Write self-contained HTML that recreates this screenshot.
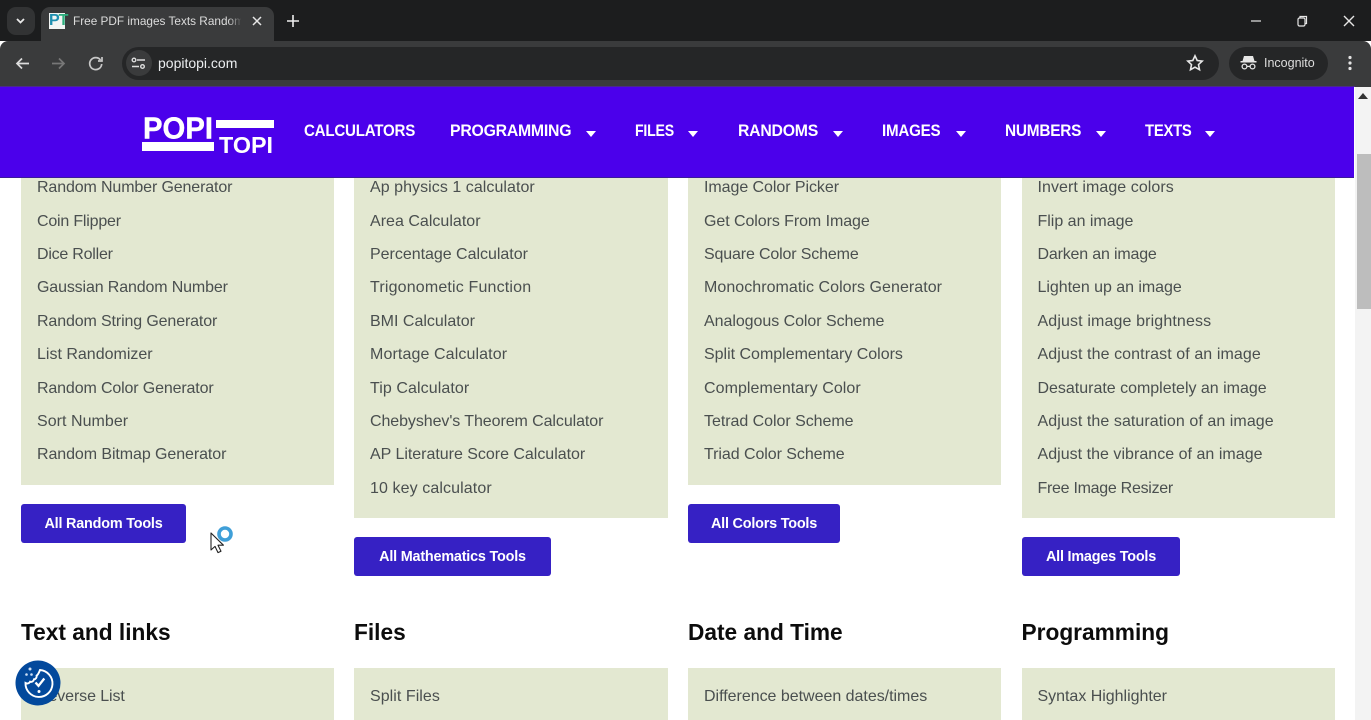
<!DOCTYPE html>
<html><head><meta charset="utf-8"><title>Free PDF images Texts Random</title>
<style>
html,body{margin:0;padding:0;background:#fff;overflow:hidden}
body{width:1371px;height:720px;position:relative;font-family:"Liberation Sans",sans-serif}
.a{position:absolute;white-space:nowrap}
.box{position:absolute;background:#e3e8d1}
.i{position:absolute;white-space:nowrap;color:#4a4f4f;font-size:16px;line-height:20px}
.btn{position:absolute;background:#3621c4;border-radius:3px;color:#fff;font-weight:bold;font-size:14.4px;line-height:40px;height:39px;text-align:center;white-space:nowrap;letter-spacing:-.2px}
.h{position:absolute;white-space:nowrap;color:#0c0c0c;font-weight:bold;font-size:22.7px;line-height:28px}
.n{position:absolute;white-space:nowrap;color:#fff;font-weight:bold;font-size:17px;line-height:20px;top:121px;letter-spacing:-.25px;transform-origin:0 50%}
.c{position:absolute;top:131px;width:0;height:0;border-left:5.5px solid transparent;border-right:5.5px solid transparent;border-top:6px solid #fff}
</style></head><body>
<!-- content -->
<div class="box" style="left:21px;top:170px;width:313px;height:315px"></div>
<div class="box" style="left:354px;top:170px;width:314px;height:348px"></div>
<div class="box" style="left:688px;top:170px;width:313px;height:315px"></div>
<div class="box" style="left:1022px;top:170px;width:313px;height:348px"></div>

<div class="i" style="left:37px;top:178px;letter-spacing:-.13px">Random Number Generator</div>
<div class="i" style="left:37px;top:212px;letter-spacing:-.2px">Coin Flipper</div>
<div class="i" style="left:37px;top:245px;letter-spacing:-.23px">Dice Roller</div>
<div class="i" style="left:37px;top:278px;letter-spacing:-.14px">Gaussian Random Number</div>
<div class="i" style="left:37px;top:312px;letter-spacing:-.13px">Random String Generator</div>
<div class="i" style="left:37px;top:345px;letter-spacing:0">List Randomizer</div>
<div class="i" style="left:37px;top:379px;letter-spacing:-.14px">Random Color Generator</div>
<div class="i" style="left:37px;top:412px;letter-spacing:.04px">Sort Number</div>
<div class="i" style="left:37px;top:445px;letter-spacing:-.08px">Random Bitmap Generator</div>

<div class="i" style="left:370px;top:178px;letter-spacing:.05px">Ap physics 1 calculator</div>
<div class="i" style="left:370px;top:212px;letter-spacing:.02px">Area Calculator</div>
<div class="i" style="left:370px;top:245px;letter-spacing:-.02px">Percentage Calculator</div>
<div class="i" style="left:370px;top:278px;letter-spacing:.17px">Trigonometic Function</div>
<div class="i" style="left:370px;top:312px;letter-spacing:0">BMI Calculator</div>
<div class="i" style="left:370px;top:345px;letter-spacing:.11px">Mortage Calculator</div>
<div class="i" style="left:370px;top:379px;letter-spacing:.08px">Tip Calculator</div>
<div class="i" style="left:370px;top:412px;letter-spacing:-.08px">Chebyshev's Theorem Calculator</div>
<div class="i" style="left:370px;top:445px;letter-spacing:-.02px">AP Literature Score Calculator</div>
<div class="i" style="left:370px;top:479px;letter-spacing:.1px">10 key calculator</div>

<div class="i" style="left:704px;top:178px;letter-spacing:-.06px">Image Color Picker</div>
<div class="i" style="left:704px;top:212px;letter-spacing:-.07px">Get Colors From Image</div>
<div class="i" style="left:704px;top:245px;letter-spacing:-.15px">Square Color Scheme</div>
<div class="i" style="left:704px;top:278px;letter-spacing:.05px">Monochromatic Colors Generator</div>
<div class="i" style="left:704px;top:312px;letter-spacing:-.05px">Analogous Color Scheme</div>
<div class="i" style="left:704px;top:345px;letter-spacing:-.01px">Split Complementary Colors</div>
<div class="i" style="left:704px;top:379px;letter-spacing:.06px">Complementary Color</div>
<div class="i" style="left:704px;top:412px;letter-spacing:-.04px">Tetrad Color Scheme</div>
<div class="i" style="left:704px;top:445px;letter-spacing:-.06px">Triad Color Scheme</div>

<div class="i" style="left:1037.5px;top:178px;letter-spacing:.06px">Invert image colors</div>
<div class="i" style="left:1037.5px;top:212px;letter-spacing:-.01px">Flip an image</div>
<div class="i" style="left:1037.5px;top:245px;letter-spacing:-.18px">Darken an image</div>
<div class="i" style="left:1037.5px;top:278px;letter-spacing:-.04px">Lighten up an image</div>
<div class="i" style="left:1037.5px;top:312px;letter-spacing:.13px">Adjust image brightness</div>
<div class="i" style="left:1037.5px;top:345px;letter-spacing:.09px">Adjust the contrast of an image</div>
<div class="i" style="left:1037.5px;top:379px;letter-spacing:-.01px">Desaturate completely an image</div>
<div class="i" style="left:1037.5px;top:412px;letter-spacing:.07px">Adjust the saturation of an image</div>
<div class="i" style="left:1037.5px;top:445px;letter-spacing:.03px">Adjust the vibrance of an image</div>
<div class="i" style="left:1037.5px;top:479px;letter-spacing:-.28px">Free Image Resizer</div>

<div class="btn" style="left:21px;top:504px;width:165px">All Random Tools</div>
<div class="btn" style="left:354px;top:537px;width:197px">All Mathematics Tools</div>
<div class="btn" style="left:688px;top:504px;width:152px">All Colors Tools</div>
<div class="btn" style="left:1022px;top:537px;width:158px">All Images Tools</div>

<div class="h" style="left:21px;top:618px">Text and links</div>
<div class="h" style="left:354px;top:618px">Files</div>
<div class="h" style="left:688px;top:618px">Date and Time</div>
<div class="h" style="left:1021.500px;top:618px">Programming</div>

<div class="box" style="left:21px;top:668px;width:313px;height:52px"></div>
<div class="box" style="left:354px;top:668px;width:314px;height:52px"></div>
<div class="box" style="left:688px;top:668px;width:313px;height:52px"></div>
<div class="box" style="left:1022px;top:668px;width:313px;height:52px"></div>
<div class="i" style="left:37px;top:687px;letter-spacing:-.1px">Reverse List</div>
<div class="i" style="left:370px;top:687px;letter-spacing:.05px">Split Files</div>
<div class="i" style="left:704px;top:687px;letter-spacing:-.02px">Difference between dates/times</div>
<div class="i" style="left:1037.5px;top:687px;letter-spacing:-.02px">Syntax Highlighter</div>

<!-- accessibility badge -->
<svg class="a" style="left:15px;top:660px" width="46" height="46" viewBox="0 0 46 46">
<circle cx="23" cy="23" r="22.500" fill="#03499c"/>
<path d="M25 10a13.500 13.500 0 1 1-14.500 13c1.800 1 3.800.4 4.600-1.300 1.800.6 3.600-.5 3.900-2.400 1.900-.2 3-1.900 2.600-3.700 1.700-1 2.500-3.500 3.400-5.600z" fill="none" stroke="#fff" stroke-width="1.900"/>
<path d="M20.500 22.500l3 3.300 5.800-7.300" fill="none" stroke="#fff" stroke-width="2.300"/>
<circle cx="15" cy="9" r="1.500" fill="#cfe0f5"/><circle cx="11.500" cy="14.500" r="1.300" fill="#cfe0f5"/><circle cx="16.500" cy="14.500" r="1.300" fill="#cfe0f5"/>
<circle cx="24" cy="31.500" r="1.500" fill="#fff"/>
</svg>

<!-- cursor -->
<svg class="a" style="left:205px;top:523px" width="36" height="32" viewBox="0 0 36 32">
<circle cx="20" cy="11" r="6" fill="none" stroke="#3f9fd8" stroke-width="3.600"/>
<path d="M6 10v17l4-3.600 3 6.200 3-1.400-3-6h5.400z" fill="#fff" stroke="#222" stroke-width="1.100" stroke-linejoin="round"/>
</svg>

<!-- nav -->
<div class="a" style="left:0;top:87px;width:1354px;height:91px;background:#4b00eb;border-bottom:1px solid #3a1a9a;box-sizing:border-box"></div>
<svg class="a" style="left:140px;top:113px" width="136" height="44" viewBox="0 0 136 44">
<text x="3" y="25.500" font-family="Liberation Sans" font-weight="bold" font-size="31" fill="#fff" stroke="#fff" stroke-width=".4" textLength="70" lengthAdjust="spacingAndGlyphs">POPI</text>
<rect x="2" y="29" width="72" height="9" fill="#fff"/>
<rect x="76" y="7" width="58" height="8" fill="#fff"/>
<text x="79" y="40" font-family="Liberation Sans" font-weight="bold" font-size="23" fill="#fff" textLength="54" lengthAdjust="spacingAndGlyphs">TOPI</text>
</svg>
<div class="n" style="left:304px;transform:scaleX(.888)">CALCULATORS</div>
<div class="n" style="left:450px;transform:scaleX(.93)">PROGRAMMING</div><div class="c" style="left:586px"></div>
<div class="n" style="left:635px;transform:scaleX(.83)">FILES</div><div class="c" style="left:688px"></div>
<div class="n" style="left:738px;transform:scaleX(.93)">RANDOMS</div><div class="c" style="left:833px"></div>
<div class="n" style="left:882px;transform:scaleX(.89)">IMAGES</div><div class="c" style="left:956px"></div>
<div class="n" style="left:1005px;transform:scaleX(.905)">NUMBERS</div><div class="c" style="left:1096px"></div>
<div class="n" style="left:1145px;transform:scaleX(.87)">TEXTS</div><div class="c" style="left:1205px"></div>

<!-- scrollbar -->
<div class="a" style="left:1355px;top:87px;width:16px;height:633px;background:#f3f3f3"></div>
<div class="a" style="left:1357px;top:154px;width:14px;height:155px;background:#bdbdbd"></div>
<div class="a" style="left:1358px;top:93px;width:0;height:0;border-left:5px solid transparent;border-right:5px solid transparent;border-bottom:6px solid #333"></div>

<!-- browser chrome -->
<div class="a" style="left:0;top:0;width:1371px;height:41px;background:#1c1d1e"></div>
<div class="a" style="left:0;top:41px;width:1371px;height:46px;background:#3a3b3c;border-radius:8px 8px 0 0"></div>
<div class="a" style="left:0;top:86px;width:1355px;height:1px;background:#4a2a8a"></div>
<div class="a" style="left:7px;top:7px;width:28px;height:28px;background:#323334;border-radius:9px"></div>
<svg class="a" style="left:14px;top:15px" width="13" height="12"><path d="M3 4l3.500 3.500L10 4" fill="none" stroke="#e8e8e8" stroke-width="1.800"/></svg>
<div class="a" style="left:41px;top:7px;width:233px;height:34px;background:#3a3b3c;border-radius:9px 9px 0 0"></div>
<div class="a" style="left:49px;top:13px;width:16px;height:16px;background:#f2f5f4"></div>
<div class="a" style="left:49px;top:12px;width:17px;height:18px;font:bold 16px/18px 'Liberation Sans',sans-serif;color:#1e8fb0;letter-spacing:-1px">P<span style="color:#2cae7d">T</span></div>
<div class="a" style="left:73px;top:13px;width:168px;overflow:hidden;font-size:11.8px;line-height:16px;color:#dcdcdc">Free PDF images Texts Random</div>
<div class="a" style="left:228px;top:12px;width:14px;height:18px;background:linear-gradient(90deg,rgba(58,59,60,0),#3a3b3c)"></div>
<svg class="a" style="left:250px;top:14px" width="14" height="14"><path d="M3 3l8 8M11 3l-8 8" stroke="#e6e6e6" stroke-width="1.500"/></svg>
<svg class="a" style="left:286px;top:14px" width="14" height="14"><path d="M7 1v12M1 7h12" stroke="#eee" stroke-width="1.600"/></svg>
<svg class="a" style="left:1250px;top:14px" width="110" height="14" fill="none" stroke="#e6e6e6" stroke-width="1.200">
<path d="M1 7h10"/><rect x="48" y="4" width="7" height="8" rx="1.500"/><path d="M50 4V2.500h6.500V9.500H55"/><path d="M94 2l10 10M104 2l-10 10" stroke-width="1.400"/></svg>

<svg class="a" style="left:14px;top:55px" width="100" height="18" fill="none" stroke-width="1.700">
<path d="M15 8.500H3M8 3.500l-5 5 5 5" stroke="#dcdcdc"/>
<path d="M38 8.500h12M45 3.500l5 5-5 5" stroke="#777"/>
<path d="M86.500 5a6 6 0 1 0 1.200 4" stroke="#c8c8c8"/><path d="M88 2v4h-4" stroke="#c8c8c8"/>
</svg>
<div class="a" style="left:122px;top:47px;width:1097px;height:33px;background:#252627;border-radius:17px"></div>
<div class="a" style="left:126px;top:50px;width:26px;height:26px;background:#3a3b3c;border-radius:13px"></div>
<svg class="a" style="left:131px;top:56px" width="16" height="15" fill="none" stroke="#ddd" stroke-width="1.400">
<path d="M6 4h8M1 10.500h7"/><circle cx="3" cy="4" r="1.800"/><circle cx="11.500" cy="10.500" r="1.800"/></svg>
<div class="a" style="left:158px;top:55px;font-size:14px;line-height:17px;color:#eceef0">popitopi.com</div>
<svg class="a" style="left:1186px;top:54px" width="18" height="18"><path d="M9 1.800l2.200 4.700 5 .6-3.700 3.500 1 5.100L9 13.200l-4.500 2.500 1-5.100L1.800 7.100l5-.6z" fill="none" stroke="#e8e8e8" stroke-width="1.600"/></svg>
<div class="a" style="left:1229px;top:47px;width:99px;height:33px;background:#252627;border-radius:17px"></div>
<svg class="a" style="left:1240px;top:55px" width="17" height="16" fill="#e6e6e6">
<path d="M4 1h9l1.500 5h2v1.500H.5V6h2z"/><circle cx="4.500" cy="11.500" r="2.400" fill="none" stroke="#e6e6e6" stroke-width="1.300"/><circle cx="12.500" cy="11.500" r="2.400" fill="none" stroke="#e6e6e6" stroke-width="1.300"/><rect x="6.800" y="10.800" width="3.400" height="1.200"/>
</svg>
<div class="a" style="left:1264px;top:55px;font-size:12.5px;line-height:16px;color:#dedede">Incognito</div>
<svg class="a" style="left:1346px;top:54px" width="8" height="18" fill="#e4e4e4"><circle cx="4" cy="3.500" r="1.600"/><circle cx="4" cy="9" r="1.600"/><circle cx="4" cy="14.500" r="1.600"/></svg>
</body></html>
